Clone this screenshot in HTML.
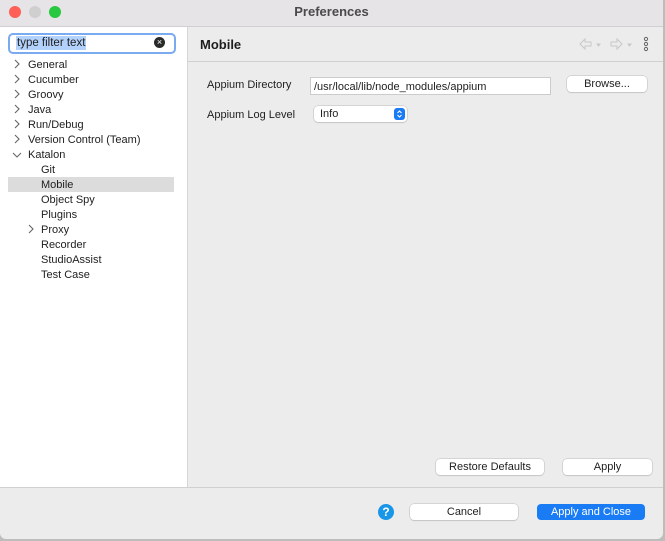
<html><head><style>
body{margin:0;width:665px;height:541px;background:#bdbdbd;font-family:"Liberation Sans",sans-serif;font-size:11px;color:#1e1e1e;position:relative;overflow:hidden}
.a{position:absolute}
.win{left:0;top:0;width:663px;height:539px;background:#ececec;border-radius:0 0 6px 6px;overflow:hidden}
.title{left:0;top:0;width:663px;height:26px;background:#e6e4e6;border-bottom:1px solid #d0d0d0;text-align:center;line-height:24px;font-weight:bold;font-size:13px;color:#4a4a4a}
.dot{width:12px;height:12px;border-radius:50%;top:6px}
.left{left:0;top:27px;width:187px;height:460px;background:#fff;border-right:1px solid #d6d6d6}
.row{position:absolute;height:15px;line-height:17px;font-size:11px}
.btn{position:absolute;background:#fff;border-radius:4px;box-shadow:0 0 0 0.5px #bbb,0 1px 1px #ccc;text-align:center;height:16px;line-height:17px;font-size:11px}
</style></head><body>
<div class="a win">
<div class="a title">Preferences</div>
<div class="a dot" style="left:9px;background:#fe5f57"></div>
<div class="a dot" style="left:29px;background:#d0cfd0"></div>
<div class="a dot" style="left:49px;background:#28c840"></div>
<div class="a left">
 <div class="a" style="left:8px;top:6px;width:164px;height:17px;border:2px solid #7aaaf0;border-radius:5px;background:#fff"></div>
 <div class="a" style="left:16px;top:9px;height:14px;line-height:15px;background:#b3d2fb;font-size:11.5px;padding:0 1px">type filter text</div>
 <div class="a" style="left:154px;top:10px;width:11px;height:11px;border-radius:50%;background:#2a2a2a;color:#fff;font-size:9px;line-height:11px;text-align:center">×</div>
 <div class="a" style="left:8px;top:150px;width:166px;height:15px;background:#dcdcdc"></div>
 <div class="row" style="left:28px;top:30px">General</div>
 <div class="row" style="left:28px;top:45px">Cucumber</div>
 <div class="row" style="left:28px;top:60px">Groovy</div>
 <div class="row" style="left:28px;top:75px">Java</div>
 <div class="row" style="left:28px;top:90px">Run/Debug</div>
 <div class="row" style="left:28px;top:105px">Version Control (Team)</div>
 <div class="row" style="left:28px;top:120px">Katalon</div>
 <svg class="a" style="left:0;top:0" width="60" height="240" fill="none" stroke="#666" stroke-width="1.1">
  <path d="M15 33l4 4-4 4M15 48l4 4-4 4M15 63l4 4-4 4M15 78l4 4-4 4M15 93l4 4-4 4M15 108l4 4-4 4M13 126l4 4 4-4M29 198l4 4-4 4"/>
 </svg>
 <div class="row" style="left:41px;top:135px">Git</div>
 <div class="row" style="left:41px;top:150px">Mobile</div>
 <div class="row" style="left:41px;top:165px">Object Spy</div>
 <div class="row" style="left:41px;top:180px">Plugins</div>
 <div class="row" style="left:41px;top:195px">Proxy</div>
 <div class="row" style="left:41px;top:210px">Recorder</div>
 <div class="row" style="left:41px;top:225px">StudioAssist</div>
 <div class="row" style="left:41px;top:240px">Test Case</div>
</div>
<div class="a" style="left:200px;top:37px;font-weight:bold;font-size:13px">Mobile</div>
<svg class="a" style="left:578px;top:37px" width="60" height="14" fill="none" stroke="#c8c8c8">
 <path d="M2 7l5-5v3h6v4h-6v3z M44 7l-5-5v3h-6v4h6v3z"/>
 <path d="M19 7h3l-1.5 2z M50 7h3l-1.5 2z" fill="#c8c8c8"/>
</svg>
<svg class="a" style="left:643px;top:36px" width="6" height="16" fill="none" stroke="#666"><circle cx="3" cy="3" r="1.6"/><circle cx="3" cy="8" r="1.6"/><circle cx="3" cy="13" r="1.6"/></svg>
<div class="a" style="left:188px;top:61px;width:475px;height:1px;background:#d0d0d0"></div>
<div class="a" style="left:207px;top:79px">Appium Directory</div>
<div class="a" style="left:310px;top:77px;width:241px;background:#fff;border:1px solid #ccc;line-height:18px;padding-left:3px;box-sizing:border-box;height:18px">/usr/local/lib/node_modules/appium</div>
<div class="btn" style="left:567px;top:76px;width:80px">Browse...</div>
<div class="a" style="left:207px;top:109px">Appium Log Level</div>
<div class="btn" style="left:314px;top:106px;width:93px;text-align:left;padding-left:6px;box-sizing:border-box">Info</div>
<div class="a" style="left:394px;top:108px;width:11px;height:12px;background:#1a7cf5;border-radius:3px"></div>
<svg class="a" style="left:394px;top:108px" width="11" height="12" fill="none" stroke="#fff" stroke-width="1"><path d="M3.5 5l2-2 2 2M3.5 7l2 2 2-2"/></svg>
<div class="btn" style="left:436px;top:459px;width:108px">Restore Defaults</div>
<div class="btn" style="left:563px;top:459px;width:89px">Apply</div>
<div class="a" style="left:0;top:487px;width:663px;height:1px;background:#d0d0d0"></div>
<div class="a" style="left:378px;top:504px;width:16px;height:16px;border-radius:50%;background:#1a96e8;color:#fff;font-weight:bold;font-size:12px;line-height:16px;text-align:center">?</div>
<div class="btn" style="left:410px;top:504px;width:108px">Cancel</div>
<div class="btn" style="left:537px;top:504px;width:108px;background:#1a7cf5;color:#fff;box-shadow:none">Apply and Close</div>
</div>
</body></html>
